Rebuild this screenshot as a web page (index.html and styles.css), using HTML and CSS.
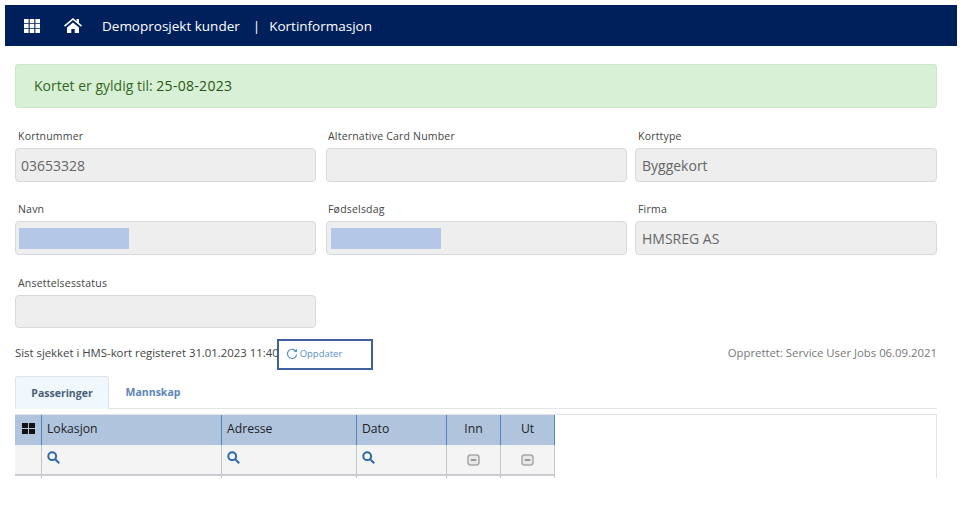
FILE: index.html
```html
<!DOCTYPE html>
<html lang="no">
<head>
<meta charset="utf-8">
<title>Kortinformasjon</title>
<link rel="stylesheet" href="styles.css">
</head>
<body>
<div class="app">
  <header class="nav">
    <svg class="icon-grid" viewBox="0 0 16 14" aria-hidden="true"><path d="M0 0h4.6v4.2H0zM5.7 0h4.6v4.2H5.7zM11.4 0H16v4.2h-4.6zM0 4.9h4.6v4.2H0zM5.7 4.9h4.6v4.2H5.7zM11.4 4.9H16v4.2h-4.6zM0 9.8h4.6V14H0zM5.7 9.8h4.6V14H5.7zM11.4 9.8H16V14h-4.6z"/></svg>
    <svg class="icon-home" viewBox="0 0 18 15" aria-hidden="true"><path d="M9 0 0 7.6l1 1.2L9 2.1l8 6.7 1-1.2-3-2.5V1h-2.4v2.2zM3 9.6V15h4.3v-4h3.4v4H15V9.6L9 4.4z"/></svg>
    <span class="crumb">Demoprosjekt kunder</span>
    <span class="sep">|</span>
    <span class="crumb">Kortinformasjon</span>
  </header>
  <main class="content">
    <div class="alert">Kortet er gyldig til: <b>25-08-2023</b></div>
    <div class="form">
      <div class="field"><label>Kortnummer</label><div class="input">03653328</div></div>
      <div class="field"><label>Alternative Card Number</label><div class="input"></div></div>
      <div class="field"><label>Korttype</label><div class="input">Byggekort</div></div>
      <div class="field"><label>Navn</label><div class="input"><span class="mask"></span></div></div>
      <div class="field"><label>Fødselsdag</label><div class="input"><span class="mask mask-date"></span></div></div>
      <div class="field"><label>Firma</label><div class="input">HMSREG AS</div></div>
      <div class="field field-status"><label>Ansettelsesstatus</label><div class="input"></div></div>
    </div>
    <div class="status">
      <span class="checked">Sist sjekket i HMS-kort registeret 31.01.2023 11:40</span>
      <button class="refresh" type="button">
        <svg viewBox="0 0 12 12" aria-hidden="true"><path class="refresh-arc" d="M9.8 3.2A4.6 4.6 0 1 0 10.6 6.6"/><path class="refresh-tip" d="M7.6 3.6 11 4.2V.8z"/></svg>Oppdater
      </button>
      <span class="created">Opprettet: Service User Jobs 06.09.2021</span>
    </div>
    <nav class="tabs">
      <span class="tab active">Passeringer</span>
      <span class="tab">Mannskap</span>
    </nav>
    <section class="grid-frame">
      <div class="grid">
        <div class="cell head corner"><svg viewBox="0 0 13 11" aria-hidden="true"><path d="M0 0h6v5H0zM7 0h6v5H7zM0 6h6v5H0zM7 6h6v5H7z"/></svg></div>
        <div class="cell head">Lokasjon</div>
        <div class="cell head">Adresse</div>
        <div class="cell head">Dato</div>
        <div class="cell head mid">Inn</div>
        <div class="cell head mid">Ut</div>
        <div class="cell filter"></div>
        <div class="cell filter"><svg class="search" viewBox="0 0 13 13" aria-hidden="true"><circle cx="5.2" cy="5.2" r="3.9"/><path d="m8.2 8.2 4 4"/></svg></div>
        <div class="cell filter"><svg class="search" viewBox="0 0 13 13" aria-hidden="true"><circle cx="5.2" cy="5.2" r="3.9"/><path d="m8.2 8.2 4 4"/></svg></div>
        <div class="cell filter"><svg class="search" viewBox="0 0 13 13" aria-hidden="true"><circle cx="5.2" cy="5.2" r="3.9"/><path d="m8.2 8.2 4 4"/></svg></div>
        <div class="cell filter mid"><svg class="tri" viewBox="0 0 13 12" aria-hidden="true"><rect class="tri-box" x="1" y="1" width="11" height="10" rx="2.4"/><path class="tri-bar" d="M3.8 6h5.4"/></svg></div>
        <div class="cell filter mid"><svg class="tri" viewBox="0 0 13 12" aria-hidden="true"><rect class="tri-box" x="1" y="1" width="11" height="10" rx="2.4"/><path class="tri-bar" d="M3.8 6h5.4"/></svg></div>
        <div class="cell stub"></div><div class="cell stub"></div><div class="cell stub"></div><div class="cell stub"></div><div class="cell stub"></div><div class="cell stub"></div>
      </div>
    </section>
  </main>
</div>
</body>
</html>
```
FILE: styles.css
```css
* { box-sizing: border-box; }
html, body { margin: 0; height: 100%; background: #fff; overflow: hidden; }
body { font-family: "Open Sans", "Noto Sans", sans-serif; color: #333; }
.app { margin: 5px 7px 0 5px; height: 473px; overflow: hidden; }
.nav { height: 41px; background: #00205b; color: #fff; display: flex; align-items: center; padding-left: 19px; font-size: 13.5px; }
.nav svg { fill: #fff; display: block; }
.icon-grid { width: 16px; height: 14px; margin-right: 24px; }
.icon-home { width: 18px; height: 15px; margin-right: 20px; }
.sep { margin: 0 9px 0 13px; }
.content { padding: 18px 20px 0 10px; }
.alert { height: 44px; background: #d8f0d6; border: 1px solid #cbe8c8; border-radius: 3px; color: #35691f; font-size: 14px; line-height: 42px; padding-left: 18px; }
.alert b { font-weight: 500; letter-spacing: .3px; color: #24570f; }
.form { display: grid; grid-template-columns: 311px 309px 302px; margin-top: 21px; row-gap: 20px; }
.field { padding-right: 10px; }
.field:nth-child(2), .field:nth-child(5) { padding-right: 8px; }
.field:nth-child(2) label, .field:nth-child(5) label { padding-left: 2px; }
.field:nth-child(3), .field:nth-child(6) { padding-right: 0; }
.field:nth-child(3) .input, .field:nth-child(6) .input { padding-left: 6px; }
.field-status { margin-top: 1px; }
.field-status .input { height: 33px; }
.field label { display: block; height: 19px; font-size: 10.5px; letter-spacing: .2px; line-height: 15px; color: #444; padding-left: 3px; }
.input { height: 34px; background: #eee; border: 1px solid #d6dade; border-radius: 4px; font-size: 14px; line-height: 34px; color: #666; padding-left: 5px; }
.mask { display: block; width: 110px; height: 21px; background: #b4c7e7; margin: 6px 0 0 -2px; }
.mask-date { margin-left: -1px; }
.status { display: flex; align-items: center; height: 31px; margin-top: 11px; font-size: 11.35px; }
.checked { color: #444; white-space: nowrap; padding-bottom: 4px; }
.refresh { width: 96px; height: 31px; margin-left: -2px; background: #fff; border: 2px solid #3f5f9f; padding: 0 0 2px 7px; display: flex; align-items: center; gap: 2px; font: inherit; font-size: 9.5px; color: #5a8fc4; text-align: left; }
.refresh svg { width: 12px; height: 12px; display: block; }
.refresh-arc { fill: none; stroke: #5a8fc4; stroke-width: 1.2; }
.refresh-tip { fill: #5a8fc4; }
.created { margin-left: auto; color: #777; padding-bottom: 4px; }
.tabs { display: flex; height: 33px; margin-top: 6px; border-bottom: 1px solid #e2e5e8; font-size: 10.5px; font-weight: 700; }
.tab { width: 94px; height: 33px; line-height: 32px; text-align: center; color: #5a86b8; }
.tab.active { background: #f0f7fd; color: #4a5f77; border: 1px solid #e2e5e8; border-bottom: 0; border-radius: 3px 3px 0 0; }
.tab + .tab { width: 88px; }
.grid-frame { margin-top: 5px; height: 69px; border: 1px solid #e2e5e8; border-bottom: 0; border-left: 0; overflow: hidden; }
.grid { display: grid; grid-template-columns: 27px 180px 135px 90px 54px 54px; grid-template-rows: 30px 31px 4px; width: 540px; }
.cell { font-size: 12.2px; padding-left: 5px; }
.head { background: #b0c4de; color: #222; line-height: 27px; border-right: 1px solid #4f86bd; font-weight: 400; }
.corner { padding: 8px 0 0 7px; }
.corner svg { width: 13px; height: 11px; display: block; fill: #111; }
.mid { text-align: center; padding-left: 0; }
.filter { background: #f4f4f4; border-right: 1px solid #c4c4c4; border-bottom: 2px solid #c8ccd0; padding-top: 6px; }
.search { width: 13px; height: 13px; display: block; fill: none; stroke: #2f6aa8; stroke-width: 2; }
.tri { width: 13px; height: 12px; display: block; margin: 3px auto 0; }
.tri-box { fill: #e8e8e8; stroke: #a8a8a8; stroke-width: 1.5; }
.tri-bar { fill: none; stroke: #777; stroke-width: 1.4; }
.stub { border-right: 1px solid #c4c4c4; }
```
